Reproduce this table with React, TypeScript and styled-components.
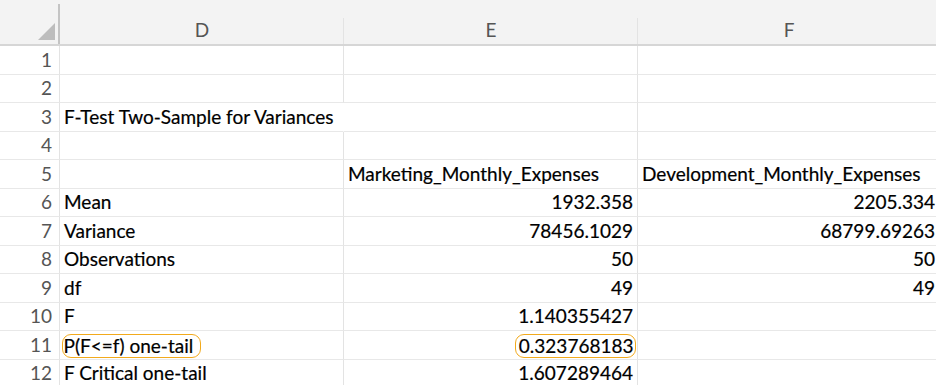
import { Fragment } from "react";
import styled, { createGlobalStyle } from "styled-components";

const GlobalStyle = createGlobalStyle`
  html, body {
    margin: 0;
    padding: 0;
    background: #fff;
    overflow: hidden;
  }
`;

const Sheet = styled.div`
  display: grid;
  grid-template-columns: 60px 284px 294px 302px;
  grid-template-rows: 46px repeat(12, 28.5px);
  width: 940px;
  font-family: Lato, "Liberation Sans", sans-serif;
  font-size: 19px;
  color: #000;
`;

const Corner = styled.div`
  background:
    linear-gradient(#c4c4c4, #c4c4c4) right 0 bottom / 2px 40px no-repeat,
    #f3f3f3;
  border-bottom: 2px solid #d6d6d6;
  display: flex;
  align-items: flex-end;
  justify-content: flex-end;
  padding: 0 5px 4px 0;
  box-sizing: border-box;
`;

const ColHeader = styled.div`
  background:
    linear-gradient(#e3e3e3, #e3e3e3) right 0 bottom / 1px 26px no-repeat,
    #f3f3f3;
  border-bottom: 2px solid #d6d6d6;
  display: flex;
  align-items: flex-end;
  justify-content: center;
  padding-bottom: 3px;
  box-sizing: border-box;
  color: #555;
`;

const RowHeader = styled.div`
  border-right: 1px solid #e3e3e3;
  border-bottom: 1px solid #e8e8e8;
  display: flex;
  align-items: flex-end;
  justify-content: flex-end;
  padding: 0 7px 3px 0;
  box-sizing: border-box;
  color: #555;
`;

const Cell = styled.div<{ $align?: "left" | "right"; $overflow?: boolean }>`
  border-right: 1px solid ${(p) => (p.$overflow ? "transparent" : "#e3e3e3")};
  border-bottom: 1px solid #e8e8e8;
  display: flex;
  align-items: flex-end;
  justify-content: ${(p) => (p.$align === "right" ? "flex-end" : "flex-start")};
  padding: 0 4px 3px 4px;
  box-sizing: border-box;
  white-space: nowrap;
  overflow: visible;
  -webkit-text-stroke: 0.2px #000;
`;

const Highlight = styled.span<{ $left: number; $right: number }>`
  border: 1.5px solid #f2aa1c;
  border-radius: 9px;
  padding: 0 ${(p) => p.$right}px 1px ${(p) => p.$left}px;
  margin: 0 ${(p) => -p.$right - 1.5}px -2px ${(p) => -p.$left - 1.5}px;
  line-height: 21px;
`;

type Row = {
  label: string;
  mid?: string;
  right?: string;
  textMid?: boolean;
  overflow?: boolean;
  mark?: boolean;
};

const rows: Row[] = [
  { label: "" },
  { label: "" },
  { label: "F-Test Two-Sample for Variances", overflow: true },
  { label: "" },
  {
    label: "",
    mid: "Marketing_Monthly_Expenses",
    right: "Development_Monthly_Expenses",
    textMid: true,
  },
  { label: "Mean", mid: "1932.358", right: "2205.334" },
  { label: "Variance", mid: "78456.1029", right: "68799.69263" },
  { label: "Observations", mid: "50", right: "50" },
  { label: "df", mid: "49", right: "49" },
  { label: "F", mid: "1.140355427" },
  { label: "P(F<=f) one-tail", mid: "0.323768183", mark: true },
  { label: "F Critical one-tail", mid: "1.607289464" },
];

function CornerMark() {
  return (
    <svg width="17" height="17" viewBox="0 0 17 17">
      <path d="M17 0 L17 17 L0 17 Z" fill="#bdbdbd" />
    </svg>
  );
}

export default function App() {
  return (
    <>
      <GlobalStyle />
      <Sheet>
        <Corner>
          <CornerMark />
        </Corner>
        <ColHeader>D</ColHeader>
        <ColHeader>E</ColHeader>
        <ColHeader>F</ColHeader>

        {rows.map((r, i) => (
          <Fragment key={i}>
            <RowHeader>{i + 1}</RowHeader>
            <Cell $overflow={r.overflow}>
              {r.mark ? (
                <Highlight $left={0.5} $right={7}>
                  {r.label}
                </Highlight>
              ) : (
                r.label
              )}
            </Cell>
            <Cell $align={r.textMid ? "left" : "right"}>
              {r.mark && r.mid ? (
                <Highlight $left={2.5} $right={1.5}>
                  {r.mid}
                </Highlight>
              ) : (
                r.mid
              )}
            </Cell>
            <Cell $align={r.textMid ? "left" : "right"}>{r.right}</Cell>
          </Fragment>
        ))}
      </Sheet>
    </>
  );
}
